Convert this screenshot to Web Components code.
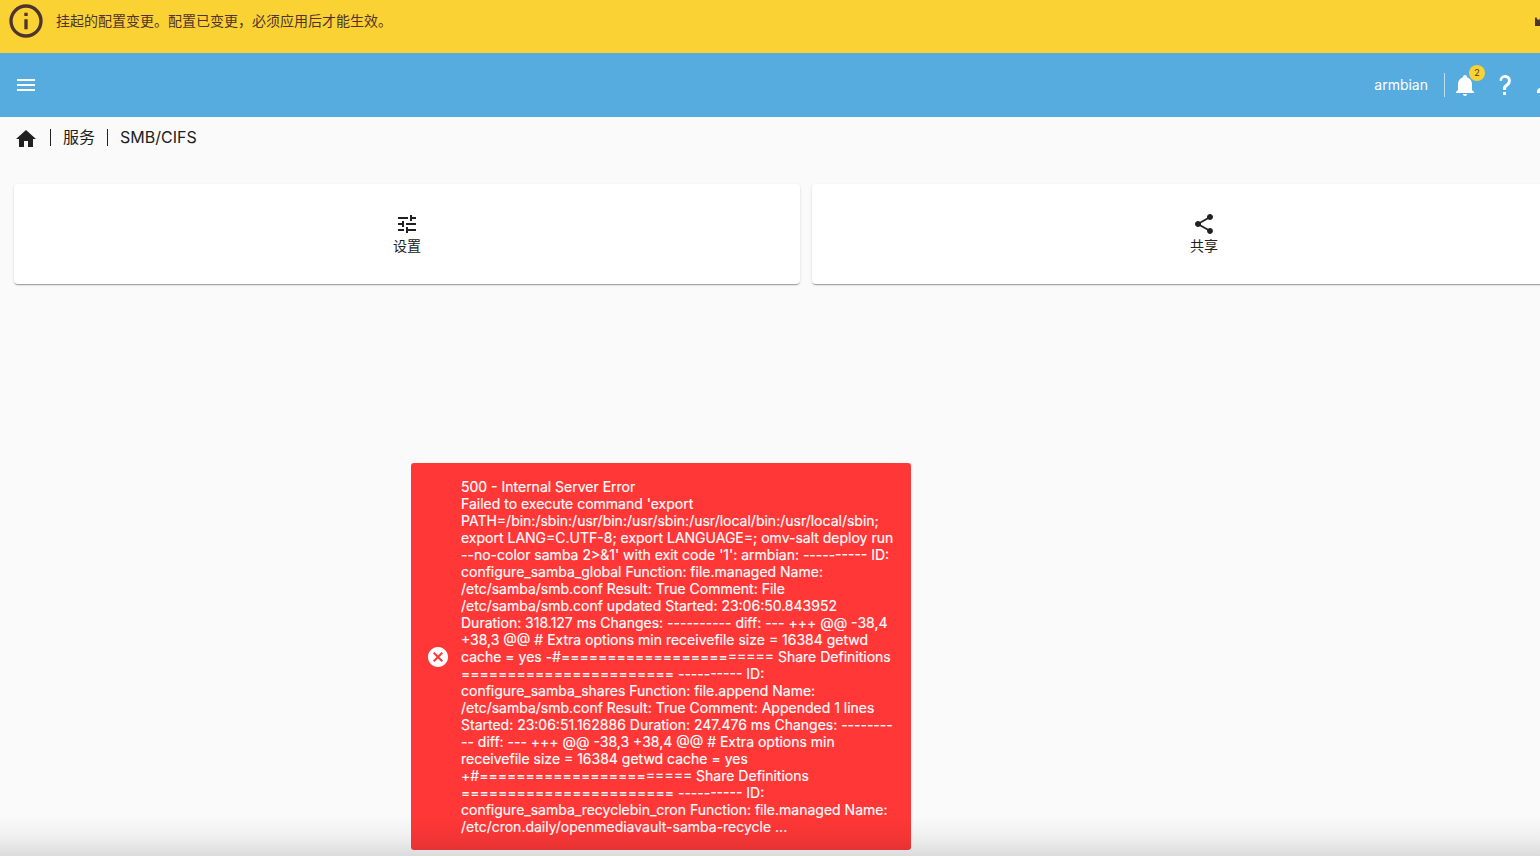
<!DOCTYPE html>
<html lang="zh">
<head>
<meta charset="utf-8">
<title>SMB/CIFS</title>
<style>
    html, body { margin: 0; height: 100%; overflow: hidden; background: #fafafa; }
    body { font-family: Inter, "Noto Sans CJK SC", sans-serif; }
    app-shell { width: 1612px; height: 856px; }
</style>
</head>
<body>
<app-shell>
    <app-banner>挂起的配置变更。配置已变更&#xFF0C;必须应用后才能生效。</app-banner>
    <app-toolbar user="armbian" count="2"></app-toolbar>
    <app-breadcrumb>
        <span>服务</span>
        <span>SMB/CIFS</span>
    </app-breadcrumb>
    <nav-cards>
        <nav-card label="设置" icon="tune"></nav-card>
        <nav-card label="共享" icon="share"></nav-card>
    </nav-cards>
    <error-toast>500 - Internal Server Error<br>Failed to execute command 'export<br>PATH=/bin:/sbin:/usr/bin:/usr/sbin:/usr/local/bin:/usr/local/sbin;<br>export LANG=C.UTF-8; export LANGUAGE=; omv-salt deploy run<br>--no-color samba 2&gt;&amp;1' with exit code '1': armbian: ---------- ID:<br>configure_samba_global Function: file.managed Name:<br>/etc/samba/smb.conf Result: True Comment: File<br>/etc/samba/smb.conf updated Started: 23:06:50.843952<br>Duration: 318.127 ms Changes: ---------- diff: --- +++ @@ -38,4<br>+38,3 @@ # Extra options min receivefile size = 16384 getwd<br>cache = yes -#======================= Share Definitions<br>======================= ---------- ID:<br>configure_samba_shares Function: file.append Name:<br>/etc/samba/smb.conf Result: True Comment: Appended 1 lines<br>Started: 23:06:51.162886 Duration: 247.476 ms Changes: --------<br>-- diff: --- +++ @@ -38,3 +38,4 @@ # Extra options min<br>receivefile size = 16384 getwd cache = yes<br>+#======================= Share Definitions<br>======================= ---------- ID:<br>configure_samba_recyclebin_cron Function: file.managed Name:<br>/etc/cron.daily/openmediavault-samba-recycle ...</error-toast>
</app-shell>
<script>
    const icons = {
        tune: 'M3 17v2h6v-2H3zM3 5v2h10V5H3zm10 16v-2h8v-2h-8v-2h-2v6h2zM7 9v2H3v2h4v2h2V9H7zm14 4v-2H11v2h10zm-6-4h2V7h4V5h-4V3h-2v6z',
        share: 'M18 16.08c-.76 0-1.44.3-1.96.77L8.91 12.7c.05-.23.09-.46.09-.7s-.04-.47-.09-.7l7.05-4.11c.54.5 1.25.81 2.04.81 1.66 0 3-1.34 3-3s-1.34-3-3-3-3 1.34-3 3c0 .24.04.47.09.7L8.04 9.81C7.5 9.31 6.79 9 6 9c-1.66 0-3 1.34-3 3s1.34 3 3 3c.79 0 1.5-.31 2.04-.81l7.12 4.16c-.05.21-.08.43-.08.65 0 1.61 1.31 2.92 2.92 2.92s2.92-1.31 2.92-2.92-1.31-2.92-2.92-2.92z',
        menu: 'M3 18h18v-2H3v2zm0-5h18v-2H3v2zm0-7v2h18V6H3z',
        bell: 'M21,19V20H3V19L5,17V11C5,7.9 7.03,5.17 10,4.29C10,4.19 10,4.1 10,4A2,2 0 0,1 12,2A2,2 0 0,1 14,4C14,4.1 14,4.19 14,4.29C16.97,5.17 19,7.9 19,11V17L21,19M14,21A2,2 0 0,1 12,23A2,2 0 0,1 10,21',
        help: 'M10,19H13V22H10V19M12,2C17.35,2.22 19.68,7.62 16.5,11.67C15.67,12.67 14.33,13.33 13.67,14.17C13,15 13,16 13,17H10C10,15.33 10,13.92 10.67,12.92C11.33,11.92 12.67,11.33 13.5,10.5C15.92,8.26 15.32,5.09 12,4.83A3,3 0 0,0 9,7.83H6.5A5.5,5.5 0 0,1 12,2Z',
        user: 'M12,4A4,4 0 0,1 16,8A4,4 0 0,1 12,12A4,4 0 0,1 8,8A4,4 0 0,1 12,4M12,14C16.42,14 20,15.79 20,18V20H4V18C4,15.79 7.58,14 12,14Z',
        home: 'M10 20v-6h4v6h5v-8h3L12 3 2 12h3v8z',
        info: 'M11,9H13V7H11M12,20C7.59,20 4,16.41 4,12C4,7.59 7.59,4 12,4C16.41,4 20,7.59 20,12C20,16.41 16.41,20 12,20M12,2A10,10 0 0,0 2,12A10,10 0 0,0 12,22A10,10 0 0,0 22,12A10,10 0 0,0 12,2M11,17H13V11H11V17Z',
        error: 'M12 2C6.47 2 2 6.47 2 12s4.47 10 10 10 10-4.47 10-10S17.53 2 12 2zm5 13.59L15.59 17 12 13.41 8.41 17 7 15.59 10.59 12 7 8.41 8.41 7 12 10.59 15.59 7 17 8.41 13.41 12 17 15.59z'
    };
    const svg = (name, size) => `<svg width="${size}" height="${size}" viewBox="0 0 24 24" fill="currentColor"><path d="${icons[name]}"/></svg>`;

    class AppShell extends HTMLElement {
        constructor() {
            super();
            const shadow = this.attachShadow({mode: 'open'});
            shadow.innerHTML = `
<style>
    :host { display: flex; flex-direction: column; position: relative; }
    div {
        position: absolute;
        left: 0; right: 0; bottom: 0;
        height: 40px;
        background: linear-gradient(rgba(0,0,0,0), rgba(0,0,0,.04) 50%, rgba(0,0,0,.12));
        pointer-events: none;
    }
</style>
<slot></slot>
<div></div>`;
        }
    }

    class AppBanner extends HTMLElement {
        constructor() {
            super();
            const shadow = this.attachShadow({mode: 'open'});
            shadow.innerHTML = `
<style>
    :host {
        display: flex;
        align-items: center;
        height: 53px;
        flex: none;
        box-sizing: border-box;
        padding: 0 0 11px 6px;
        background: #fbd234;
        color: #4e342e;
        font-size: 14px;
    }
    .text { margin: 0 0 2px 10px; flex: 1; }
    /* the only part of the close button the window still shows */
    .close { margin-right: 72px; display: flex; }
</style>
${svg('info', 40)}
<span class="text"><slot></slot></span>
<span class="close"><svg width="5" height="9" viewBox="0 0 5 9" fill="currentColor"><path d="M0 9V1L1 0 3 3 5 2V9Z"/></svg></span>`;
        }
    }

    class AppToolbar extends HTMLElement {
        constructor() {
            super();
            const shadow = this.attachShadow({mode: 'open'});
            shadow.innerHTML = `
<style>
    :host {
        display: flex;
        align-items: center;
        flex: none;
        height: 64px;
        padding-left: 14px;
        padding-right: 55px;
        background: #56acdf;
        color: #fff;
        font-size: 14px;
    }
    svg { display: block; }
    .menu { flex: 1; }
    .name { margin-bottom: 2px; }
    .sep { width: 1px; height: 24px; background: rgba(255,255,255,.6); margin: 0 8px 0 16px; }
    .bell { position: relative; margin-right: 16px; }
    .badge {
        position: absolute;
        top: -8px; right: -8px;
        width: 16px; height: 16px;
        border-radius: 50%;
        background: #fbd234;
        color: #4e342e;
        font-size: 9px;
        line-height: 16px;
        text-align: center;
    }
    .help { margin-right: 16px; }
</style>
<div class="menu">${svg('menu', 24)}</div>
<span class="name">${this.getAttribute('user')}</span>
<div class="sep"></div>
<div class="bell">${svg('bell', 24)}<span class="badge">${this.getAttribute('count')}</span></div>
<div class="help">${svg('help', 24)}</div>
<div>${svg('user', 24)}</div>`;
        }
    }

    class AppBreadcrumb extends HTMLElement {
        constructor() {
            super();
            const shadow = this.attachShadow({mode: 'open'});
            shadow.innerHTML = `
<style>
    :host {
        display: flex;
        align-items: center;
        flex: none;
        height: 41px;
        padding-left: 14px;
        color: #212121;
        font-size: 16px;
    }
    svg { display: block; margin-top: 3px; }
    ::slotted(span) {
        border-left: 1px solid #212121;
        padding-left: 12px;
        margin-left: 12px;
        line-height: 17px;
    }
</style>
${svg('home', 24)}
<slot></slot>`;
        }
    }

    class NavCards extends HTMLElement {
        constructor() {
            super();
            const shadow = this.attachShadow({mode: 'open'});
            shadow.innerHTML = `
<style>
    :host {
        display: grid;
        grid-template-columns: 786px 784px;
        gap: 12px;
        flex: none;
        padding: 26px 14px 0;
    }
</style>
<slot></slot>`;
        }
    }

    class NavCard extends HTMLElement {
        constructor() {
            super();
            const shadow = this.attachShadow({mode: 'open'});
            shadow.innerHTML = `
<style>
    :host {
        display: flex;
        flex-direction: column;
        align-items: center;
        height: 100px;
        box-sizing: border-box;
        padding-top: 28px;
        background: #fff;
        border-radius: 4px;
        box-shadow: 0 2px 1px -1px rgba(0,0,0,.2), 0 1px 1px 0 rgba(0,0,0,.14), 0 1px 3px 0 rgba(0,0,0,.12);
        color: #212121;
        font-size: 14px;
        line-height: 20px;
    }
    svg { display: block; }
</style>
${svg(this.getAttribute('icon'), 24)}
<span>${this.getAttribute('label')}</span>`;
        }
    }

    class ErrorToast extends HTMLElement {
        constructor() {
            super();
            const shadow = this.attachShadow({mode: 'open'});
            shadow.innerHTML = `
<style>
    :host {
        position: absolute;
        left: 411px; top: 463px;
        width: 500px; height: 387px;
        box-sizing: border-box;
        display: flex;
        align-items: center;
        padding: 15px;
        background: #ff3737;
        border-radius: 3px;
        color: #fff;
        font-size: 14px;
        line-height: 17px;
        white-space: nowrap;
        -webkit-text-stroke: .15px #fff;
    }
    .icon { flex: none; width: 24px; margin-right: 11px; display: flex; }
</style>
<span class="icon">${svg('error', 24)}</span>
<div><slot></slot></div>`;
        }
    }

    customElements.define('app-shell', AppShell);
    customElements.define('app-banner', AppBanner);
    customElements.define('app-toolbar', AppToolbar);
    customElements.define('app-breadcrumb', AppBreadcrumb);
    customElements.define('nav-cards', NavCards);
    customElements.define('nav-card', NavCard);
    customElements.define('error-toast', ErrorToast);
</script>
</body>
</html>
